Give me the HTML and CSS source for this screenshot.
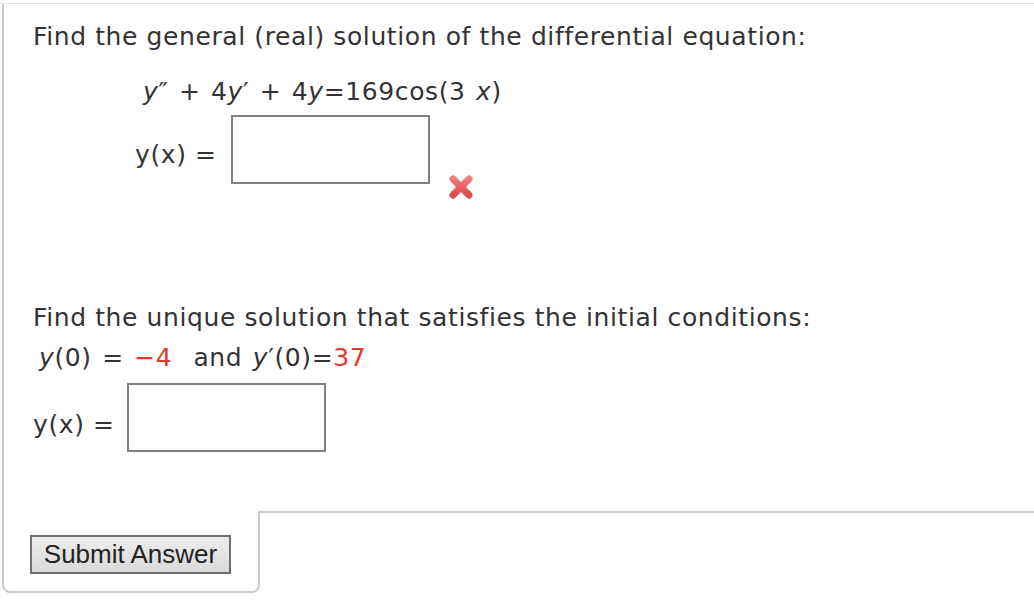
FILE: index.html
```html
<!DOCTYPE html>
<html lang="en">
<head>
<meta charset="utf-8">
<title>Question</title>
<link rel="stylesheet" href="styles.css">
</head>
<body>
<div class="topline"></div>
<div class="panel">
  <section class="main">
    <p class="q">Find the general (real) solution of the differential equation:</p>
    <div class="eq"><i>y</i>″ + 4<i>y</i>′ + 4<i>y</i>=169cos(3 <i>x</i>)</div>
    <div class="ansrow row1">
      <span class="label">y(x) =</span>
      <input class="box" type="text" aria-label="y(x)">
      <svg class="wrong" width="28" height="28" viewBox="0 0 28 28" aria-hidden="true">
        <defs>
          <linearGradient id="rg" x1="0" y1="0" x2="0" y2="1">
            <stop offset="0" stop-color="#f07b7b"/>
            <stop offset="1" stop-color="#de4848"/>
          </linearGradient>
        </defs>
        <path d="M6 6 L22 22 M22 6 L6 22" stroke="url(#rg)" stroke-width="7" stroke-linecap="round" fill="none"/>
      </svg>
    </div>
    <p class="q q2">Find the unique solution that satisfies the initial conditions:</p>
    <div class="ic"><i>y</i>(0) = <span class="red">−4</span>&nbsp; and <i>y</i>′(0)=<span class="red">37</span></div>
    <div class="ansrow row2">
      <span class="label">y(x) =</span>
      <input class="box" type="text" aria-label="y(x)">
    </div>
  </section>
  <div class="bottom">
    <div class="tab"><button class="submit" type="button">Submit Answer</button></div>
    <div class="rest"></div>
  </div>
</div>
</body>
</html>
```
FILE: styles.css
```css
html, body {
  margin: 0;
  padding: 0;
  background: #ffffff;
}
body {
  font-family: "DejaVu Sans", Verdana, sans-serif;
  font-size: 25px;
  letter-spacing: 0.6px;
  line-height: 28px;
  color: #333333;
  width: 1034px;
  height: 604px;
  overflow: hidden;
}
.topline {
  height: 1px;
  margin-top: 3px;
  background: #e2e2e2;
}
.panel {
  margin-left: 2px;
}
.main {
  border-left: 2px solid #cccccc;
  padding: 19px 0 59px 29px;
}
.q {
  margin: 0;
}
.eq {
  margin-top: 27px;
  padding-left: 110px;
  word-spacing: 2px;
}
.ansrow {
  display: flex;
  align-items: flex-start;
}
.row1 {
  margin-top: 9px;
  padding-left: 102px;
}
.row1 .label {
  margin-top: 26px;
  margin-right: 14px;
}
.box {
  box-sizing: border-box;
  width: 199px;
  height: 69px;
  border: 2px solid #808080;
  background: #ffffff;
  margin: 0;
  padding: 0;
  font: inherit;
}
.wrong {
  margin-top: 58px;
  margin-left: 17px;
}
.q2 {
  margin-top: 103px;
}
.ic {
  margin-top: 12px;
  padding-left: 6px;
  word-spacing: 2px;
}
.red {
  color: #e5372b;
}
.row2 {
  margin-top: 11px;
}
.row2 .label {
  margin-top: 28px;
  margin-right: 12px;
}
.bottom {
  display: flex;
  align-items: flex-start;
}
.tab {
  box-sizing: border-box;
  width: 258px;
  border-left: 2px solid #cccccc;
  border-right: 2px solid #cccccc;
  border-bottom: 2px solid #cccccc;
  border-radius: 0 0 8px 8px;
  padding: 24px 0 17px 26px;
}
.submit {
  box-sizing: border-box;
  width: 201px;
  height: 39px;
  border: 2px solid #6f6f6f;
  background: linear-gradient(#ececec, #dadada);
  font-family: "Liberation Sans", Arial, sans-serif;
  font-size: 26px;
  letter-spacing: 0;
  color: #222222;
  padding: 0;
  margin: 0;
  display: block;
}
.rest {
  flex: 1;
  border-top: 2px solid #cccccc;
}
```
